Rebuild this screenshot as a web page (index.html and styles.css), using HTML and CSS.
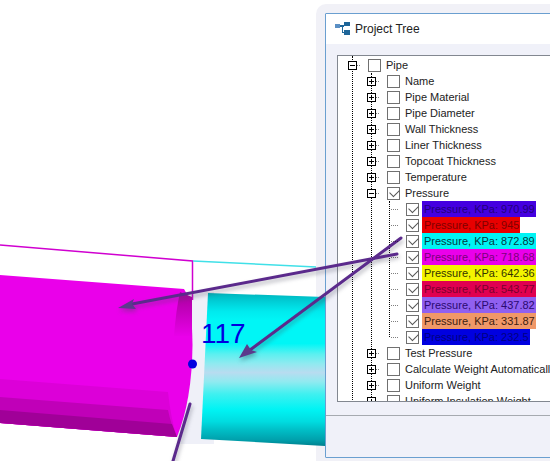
FILE: index.html
```html
<!DOCTYPE html>
<html lang="en">
<head>
<meta charset="utf-8">
<title>Project Tree</title>
<link rel="stylesheet" href="styles.css">
</head>
<body>
<div class="glow"></div>
<svg class="scene" width="550" height="461" viewBox="0 0 550 461">
  <defs>
    <linearGradient id="cyanBands" x1="0" y1="0" x2="0" y2="1">
      <stop offset="0" stop-color="#00b4bc"/>
      <stop offset="0.06" stop-color="#00d0d8"/>
      <stop offset="0.12" stop-color="#00eaee"/>
      <stop offset="0.18" stop-color="#00f6f6"/>
      <stop offset="0.33" stop-color="#00f6f6"/>
      <stop offset="0.4" stop-color="#5cf0f0"/>
      <stop offset="0.46" stop-color="#8eeaf0"/>
      <stop offset="0.52" stop-color="#b8dcf0"/>
      <stop offset="0.58" stop-color="#90eaf0"/>
      <stop offset="0.66" stop-color="#40f0f0"/>
      <stop offset="0.76" stop-color="#00f4f4"/>
      <stop offset="0.84" stop-color="#00dce0"/>
      <stop offset="0.9" stop-color="#00bcc4"/>
      <stop offset="0.96" stop-color="#00a0ac"/>
      <stop offset="1" stop-color="#00808e"/>
    </linearGradient>
    <linearGradient id="cap" x1="0" y1="0" x2="0" y2="1">
      <stop offset="0" stop-color="#a8009c"/>
      <stop offset="1" stop-color="#e800e8"/>
    </linearGradient>
  </defs>
  <rect class="gap" x="178" y="292" width="36" height="152"/>
  <path class="wire-m" d="M0 245 L192.500 261 V300"/>
  <path class="wire-c" d="M193 261 L316 267"/>
  <path class="pipe-m" d="M0 275 L184 289 Q192 300 192.500 345 Q192 400 177 437 L0 423 Z"/>
  <path class="band1" d="M0 379 L168 392 Q171 420 177 437 L0 423 Z"/>
  <path class="band2" d="M0 397 L168 410 Q171 425 177 437 L0 423 Z"/>
  <path class="band3" d="M0 410 L172 424 L177 437 L0 423 Z"/>
  <path class="cap" d="M180 292 L192 297 L192 336 L174 336 Q176 310 180 292 Z" fill="url(#cap)"/>
  <path d="M208 293 L325 297 V446 L201 439 Z" fill="url(#cyanBands)"/>
  <circle class="dot" cx="192.500" cy="364" r="4.500"/>
  <text class="count" x="201" y="343">117</text>
</svg>

<section class="window">
  <header class="titlebar">
    <svg class="tree-icon" width="16" height="16" viewBox="0 0 16 16">
      <rect class="icon-light" x="0" y="3" width="5" height="4"/>
      <rect class="icon-dark" x="5" y="4" width="4" height="2"/>
      <rect class="icon-dark" x="9" y="1" width="6" height="4"/>
      <rect class="icon-dark" x="9" y="9" width="6" height="5"/>
      <rect class="icon-dark" x="7" y="4" width="1" height="8"/>
      <rect class="icon-dark" x="7" y="11" width="2" height="1"/>
    </svg>
    <h1 class="title">Project Tree</h1>
  </header>
  <div class="tree">
    <ul class="level root">
      <li>
        <div class="row"><i class="toggle minus"></i><i class="stub"></i><i class="box"></i><span class="label">Pipe</span></div>
        <ul class="level second">
          <li><div class="row"><i class="toggle plus"></i><i class="stub"></i><i class="box"></i><span class="label">Name</span></div></li>
          <li><div class="row"><i class="toggle plus"></i><i class="stub"></i><i class="box"></i><span class="label">Pipe Material</span></div></li>
          <li><div class="row"><i class="toggle plus"></i><i class="stub"></i><i class="box"></i><span class="label">Pipe Diameter</span></div></li>
          <li><div class="row"><i class="toggle plus"></i><i class="stub"></i><i class="box"></i><span class="label">Wall Thickness</span></div></li>
          <li><div class="row"><i class="toggle plus"></i><i class="stub"></i><i class="box"></i><span class="label">Liner Thickness</span></div></li>
          <li><div class="row"><i class="toggle plus"></i><i class="stub"></i><i class="box"></i><span class="label">Topcoat Thickness</span></div></li>
          <li><div class="row"><i class="toggle plus"></i><i class="stub"></i><i class="box"></i><span class="label">Temperature</span></div></li>
          <li>
            <div class="row"><i class="toggle minus"></i><i class="stub"></i><i class="box checked"></i><span class="label">Pressure</span></div>
            <ul class="level third">
              <li><div class="row"><i class="stub leaf"></i><i class="box checked"></i><span class="label chip indigo">Pressure, KPa: 970.99</span></div></li>
              <li><div class="row"><i class="stub leaf"></i><i class="box checked"></i><span class="label chip red">Pressure, KPa: 945</span></div></li>
              <li><div class="row"><i class="stub leaf"></i><i class="box checked"></i><span class="label chip cyan">Pressure, KPa: 872.89</span></div></li>
              <li><div class="row"><i class="stub leaf"></i><i class="box checked"></i><span class="label chip magenta">Pressure, KPa: 718.68</span></div></li>
              <li><div class="row"><i class="stub leaf"></i><i class="box checked"></i><span class="label chip yellow">Pressure, KPa: 642.36</span></div></li>
              <li><div class="row"><i class="stub leaf"></i><i class="box checked"></i><span class="label chip crimson">Pressure, KPa: 543.77</span></div></li>
              <li><div class="row"><i class="stub leaf"></i><i class="box checked"></i><span class="label chip violet">Pressure, KPa: 437.82</span></div></li>
              <li><div class="row"><i class="stub leaf"></i><i class="box checked"></i><span class="label chip salmon">Pressure, KPa: 331.87</span></div></li>
              <li><div class="row"><i class="stub leaf"></i><i class="box checked"></i><span class="label chip blue">Pressure, KPa: 232.5</span></div></li>
            </ul>
          </li>
          <li><div class="row"><i class="toggle plus"></i><i class="stub"></i><i class="box"></i><span class="label">Test Pressure</span></div></li>
          <li><div class="row"><i class="toggle plus"></i><i class="stub"></i><i class="box"></i><span class="label">Calculate Weight Automatically</span></div></li>
          <li><div class="row"><i class="toggle plus"></i><i class="stub"></i><i class="box"></i><span class="label">Uniform Weight</span></div></li>
          <li><div class="row"><i class="toggle plus"></i><i class="stub"></i><i class="box"></i><span class="label">Uniform Insulation Weight</span></div></li>
        </ul>
      </li>
    </ul>
  </div>
  <div class="scrollbar-gap"></div>
  <div class="divider"></div>
</section>

<svg class="arrows" width="550" height="461" viewBox="0 0 550 461">
  <path d="M397 254 L132 304"/>
  <path class="head" d="M118 308 L134 299 L132 304 L136 309 Z"/>
  <path d="M401 238 L250 350"/>
  <path class="head" d="M239 358 L247 344 L251 350 L257 352 Z"/>
  <path d="M190 404 L173 461"/>
</svg>
</body>
</html>
```
FILE: styles.css
```css
* { box-sizing: border-box; }
html, body { margin: 0; padding: 0; }
body {
  position: relative;
  width: 550px;
  height: 461px;
  overflow: hidden;
  background: #fff;
  font-family: "Liberation Sans", "Noto Sans", sans-serif;
}
.glow {
  position: absolute;
  left: 316px;
  top: 4px;
  width: 260px;
  height: 480px;
  background: #f1f1f7;
  border-radius: 10px;
}
.scene, .arrows { position: absolute; left: 0; top: 0; display: block; }
.arrows { pointer-events: none; filter: drop-shadow(1px 3px 2px rgba(70, 70, 90, .4)); }
.arrows path { fill: none; stroke: #5b2a8c; stroke-width: 3; stroke-linecap: round; }
.arrows .head { fill: #5b3a8c; stroke: none; }
.gap { fill: #eff0f8; }
.wire-m { fill: none; stroke: #d000d0; stroke-width: 1.500; }
.wire-c { fill: none; stroke: #40e0e8; stroke-width: 1.500; }
.pipe-m { fill: #ea00ea; }
.band1 { fill: #dc00d8; }
.band2 { fill: #c000b8; }
.band3 { fill: #a00098; }
.dot { fill: #0000e0; }
.count { fill: #0000e0; font: 28px "Liberation Sans", sans-serif; }

.window {
  position: absolute;
  left: 325px;
  top: 13px;
  width: 240px;
  height: 445px;
  display: flex;
  flex-direction: column;
  background: #f0f1f9;
  border: 1px solid #6a9fd0;
  border-radius: 1px;
}
.titlebar {
  display: flex;
  align-items: center;
  gap: 4px;
  height: 30px;
  padding-left: 9px;
  background: #fff;
  flex: none;
}
.tree-icon { flex: none; }
.icon-light { fill: #5a8fc4; }
.icon-dark { fill: #1f6699; }
.title { margin: 0; font-size: 12px; font-weight: 400; color: #222; }
.tree {
  flex: none;
  height: 347px;
  margin: 11px 0 0 11px;
  overflow: hidden;
  background: #fff;
  border: 1px solid #828790;
  border-right: 0;
}
.level { list-style: none; margin: 0; padding: 0; position: relative; }
.root { padding: 1px 0 0 10px; }
.root::before {
  content: "";
  position: absolute;
  left: 14px;
  top: 0;
  height: 400px;
  border-left: 1px dotted #000;
}
.second { padding-left: 19px; }
.second::before {
  content: "";
  position: absolute;
  left: 23px;
  top: 0;
  height: 400px;
  border-left: 1px dotted #000;
}
.third { padding-left: 19px; }
.third::before {
  content: "";
  position: absolute;
  left: 22px;
  top: 0;
  height: 136px;
  border-left: 1px dotted #000;
}
.row {
  display: flex;
  align-items: center;
  height: 16px;
  position: relative;
  white-space: nowrap;
}
.toggle {
  flex: none;
  position: relative;
  width: 9px;
  height: 9px;
  background: #fff;
  border: 1px solid #000;
  z-index: 1;
}
.toggle::before {
  content: "";
  position: absolute;
  left: 1px;
  top: 3px;
  width: 5px;
  height: 1px;
  background: #000;
}
.plus::after {
  content: "";
  position: absolute;
  left: 3px;
  top: 1px;
  width: 1px;
  height: 5px;
  background: #000;
}
.stub {
  flex: none;
  width: 11px;
  height: 1px;
  border-top: 1px dotted #000;
  clip-path: inset(0 7px 0 0);
}
.stub.leaf { width: 20px; clip-path: inset(0 7px 0 4px); position: relative; z-index: 1; }
.box {
  flex: none;
  position: relative;
  width: 13px;
  height: 13px;
  background: #fff;
  border: 1px solid #707070;
  margin-right: 5px;
}
.checked::after {
  content: "";
  position: absolute;
  left: 2px;
  top: 1px;
  width: 8px;
  height: 5px;
  border-left: 1.500px solid #555;
  border-bottom: 1.500px solid #555;
  transform: rotate(-45deg);
}
.label { font-size: 11px; line-height: 16px; color: #222; padding-left: 0; }
.chip { padding: 0 1px 0 2px; margin-left: -2px; }
.indigo { background: #4400e0; color: #22007a; }
.red { background: #e80000; color: #800000; }
.cyan { background: #00f4f4; color: #003a40; }
.magenta { background: #ea00ea; color: #7a007a; }
.yellow { background: #f4f400; color: #333300; }
.crimson { background: #e00050; color: #7a002c; }
.violet { background: #9060f0; color: #2a0a70; }
.salmon { background: #f09868; color: #402010; }
.blue { background: #0000e0; color: #000080; }
.scrollbar-gap { height: 13px; flex: none; }
.divider { height: 1px; background: #a6aab0; flex: none; }
```
